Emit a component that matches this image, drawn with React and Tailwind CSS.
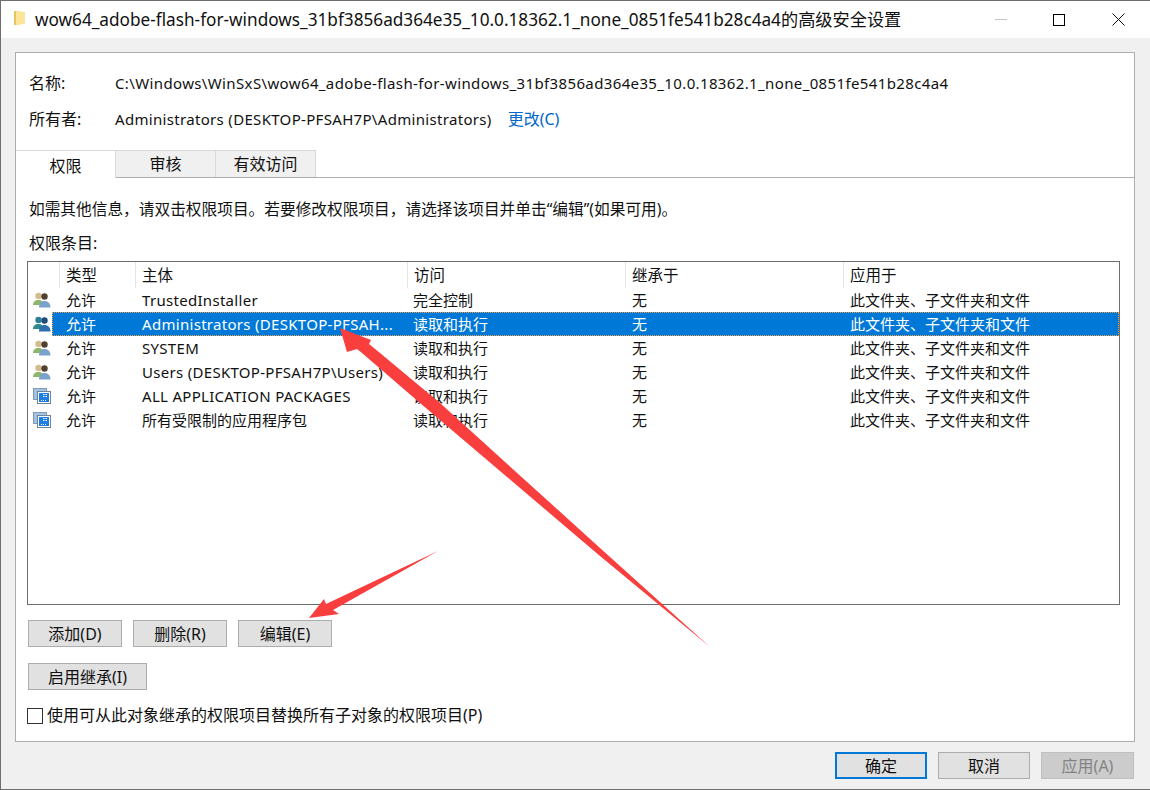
import React from "react";

const font = { fontFamily: '"Noto Sans", "Noto Sans CJK SC", sans-serif' };

const rows = [
  { icon: "user", who: "TrustedInstaller", access: "完全控制" },
  { icon: "user", who: "Administrators (DESKTOP-PFSAH...", access: "读取和执行", selected: true },
  { icon: "user", who: "SYSTEM", access: "读取和执行" },
  { icon: "user", who: "Users (DESKTOP-PFSAH7P\\Users)", access: "读取和执行" },
  { icon: "app", who: "ALL APPLICATION PACKAGES", access: "读取和执行" },
  { icon: "app", who: "所有受限制的应用程序包", access: "读取和执行", cjk: true },
];

const UsersIcon = ({ selected }) => (
  <svg width="18" height="16" viewBox="0 0 18 16">
    <circle cx="5.5" cy="4" r="3.2" fill={selected ? "#2f7d9c" : "#d6bc88"} />
    <path d="M0 13c0-3 2-5 5.500-5s4.500 2 4.500 5z" fill={selected ? "#2f8a8a" : "#8fb56a"} />
    <circle cx="11.5" cy="4.5" r="3.2" fill={selected ? "#1d4d78" : "#4f4034"} />
    <path d="M6 15.500c0-4 2-6.500 5.500-6.500s6 2.500 6 6.500z" fill={selected ? "#2f6fb0" : "#7aa3cc"} />
  </svg>
);

const AppIcon = () => (
  <svg width="18" height="16" viewBox="0 0 18 16">
    <rect x="0.5" y="0.5" width="13" height="11" fill="#9cc4ea" stroke="#8a96a3" />
    <rect x="4.500" y="3.500" width="13" height="12" fill="#fff" stroke="#75828f" />
    <rect x="6" y="5" width="10" height="9" fill="#1f7fe0" />
    <path d="M10 6.500h1.500M12.500 6.500h1.500M10 8.500h1.500M12.500 8.500h1.500M8 12.500h1M10 12.500h1M12 12.500h1" stroke="#fff" strokeWidth="1" />
  </svg>
);

const Button = ({ children, className = "" }) => (
  <button className={`h-[27px] bg-[#e1e1e1] text-[16px] text-[#111] ${className}`}>
    {children}
  </button>
);

const App = () => {
  return (
    <div style={font} className="relative h-[790px] w-[1150px] overflow-hidden border-t border-b border-l border-[#6d6d6d] bg-[#f0f0f0] text-[15px] leading-[20px] text-[#111]">
      {/* title bar */}
      <div className="flex h-[37px] items-center bg-white pl-[13px]">
        <svg width="13" height="16" viewBox="0 0 13 16" className="mb-[3px]">
          <path d="M0 1h5v14H0z" fill="#e8c65e" />
          <path d="M2 1l9 1v12l-9 1z" fill="#fbe59a" />
        </svg>
        <div className="ml-[8px] text-[17.2px] whitespace-nowrap">
          wow64_adobe-flash-for-windows_31bf3856ad364e35_10.0.18362.1_none_0851fe541b28c4a4的高级安全设置
        </div>
        <div className="ml-auto flex items-center">
          <div className="h-px w-[12px] bg-[#c4c4c4]" />
          <div className="ml-[46px] h-[12px] w-[12px] border border-black" />
          <svg width="13" height="13" viewBox="0 0 13 13" className="mr-[25px] ml-[47px]">
            <path d="M.5.5l12 12M12.500.5l-12 12" stroke="#111" fill="none" />
          </svg>
        </div>
      </div>

      {/* main panel */}
      <div className="mt-[14px] ml-[14px] h-[690px] w-[1120px] border border-[#adadad] bg-white">
        <div className="flex pt-[20px] pl-[13px]">
          <div className="w-[86px] text-[16px]">名称:</div>
          <div className="tracking-[0.37px] whitespace-nowrap">C:\Windows\WinSxS\wow64_adobe-flash-for-windows_31bf3856ad364e35_10.0.18362.1_none_0851fe541b28c4a4</div>
        </div>
        <div className="flex pt-[16px] pl-[13px]">
          <div className="w-[86px] text-[16px]">所有者:</div>
          <div className="tracking-[0.32px] whitespace-nowrap">Administrators (DESKTOP-PFSAH7P\Administrators)</div>
          <div className="ml-[16px] text-[16px] text-[#0066cc]">更改(C)</div>
        </div>

        {/* tabs */}
        <div className="mt-[21px] flex h-[28px] items-end border-b border-[#adadad] text-[16px]">
          <div className="-mb-px flex h-[28px] w-[100px] items-center justify-center border-t border-r border-[#d9d9d9] bg-white pt-[2px]">权限</div>
          <div className="flex h-[27px] w-[100px] items-center justify-center border-t border-r border-[#d9d9d9] bg-[#f0f0f0]">审核</div>
          <div className="flex h-[27px] w-[100px] items-center justify-center border-t border-r border-[#d9d9d9] bg-[#f0f0f0]">有效访问</div>
        </div>

        <div className="mt-[21px] pl-[13px] text-[15.7px]">如需其他信息，请双击权限项目。若要修改权限项目，请选择该项目并单击“编辑”(如果可用)。</div>
        <div className="mt-[14px] pl-[13px] text-[16px]">权限条目:</div>

        {/* list */}
        <div className="mt-[8px] ml-[11px] h-[344px] w-[1093px] border border-[#6d6d6d]">
          <div className="flex h-[26px] items-center text-[15.5px]">
            <div className="h-full w-[32px] border-r border-[#e5e5e5]" />
            <div className="flex h-full w-[76px] items-center border-r border-[#e5e5e5] pl-[6px]">类型</div>
            <div className="flex h-full w-[272px] items-center border-r border-[#e5e5e5] pl-[6px]">主体</div>
            <div className="flex h-full w-[218px] items-center border-r border-[#e5e5e5] pl-[6px]">访问</div>
            <div className="flex h-full w-[218px] items-center border-r border-[#e5e5e5] pl-[6px]">继承于</div>
            <div className="flex h-full items-center pl-[6px]">应用于</div>
          </div>
          {rows.map((row) => (
            <div key={row.who} className="flex h-[24px] items-center">
              <div className="flex w-[24px] justify-end pr-[1px]">
                {row.icon === "user" ? <UsersIcon selected={row.selected} /> : <AppIcon />}
              </div>
              <div className={`flex h-full flex-1 items-center ${row.selected ? "bg-[#0078d7] text-white outline-1 -outline-offset-1 outline-[#e8a04a] outline-dotted" : ""}`}>
                <div className="w-[90px] pl-[14px]">允许</div>
                <div className={`w-[271px] whitespace-nowrap ${row.cjk ? "" : "tracking-[0.3px]"}`}>{row.who}</div>
                <div className="w-[219px]">{row.access}</div>
                <div className="w-[218px]">无</div>
                <div>此文件夹、子文件夹和文件</div>
              </div>
            </div>
          ))}
        </div>

        {/* buttons */}
        <div className="mt-[15px] ml-[12px] flex gap-[11px]">
          <Button className="w-[94px] border border-[#adadad]">添加(D)</Button>
          <Button className="w-[94px] border border-[#adadad]">删除(R)</Button>
          <Button className="w-[94px] border border-[#adadad]">编辑(E)</Button>
        </div>
        <Button className="mt-[16px] ml-[12px] w-[119px] border border-[#adadad]">启用继承(I)</Button>
        <div className="mt-[15px] ml-[11px] flex items-center">
          <div className="mt-[2px] h-[16px] w-[16px] border border-[#333] bg-white" />
          <div className="ml-[4px] text-[16px]">使用可从此对象继承的权限项目替换所有子对象的权限项目(P)</div>
        </div>
      </div>

      {/* footer buttons */}
      <div className="mt-[10px] mr-[16px] flex justify-end gap-[11px]">
        <Button className="w-[92px] border-2 border-[#0078d7]">确定</Button>
        <Button className="w-[92px] border border-[#adadad]">取消</Button>
        <button className="h-[27px] w-[93px] border border-[#bfbfbf] bg-[#cccccc] text-[16px] text-[#838383]">应用(A)</button>
      </div>

      {/* red annotation arrows */}
      <svg className="absolute top-[-1px] left-[-1px]" width="1150" height="790" viewBox="0 0 1150 790">
        <path d="M340 328L371 340 369 344 380 353 440 403 600 548 710 647 600 556 420 403 362 353 357 349 347 352z" fill="#f93e3e" />
        <path d="M309 618L324 599 326 604 438 551 333 610 339 614z" fill="#f93e3e" />
      </svg>
    </div>
  );
};

export default App;
